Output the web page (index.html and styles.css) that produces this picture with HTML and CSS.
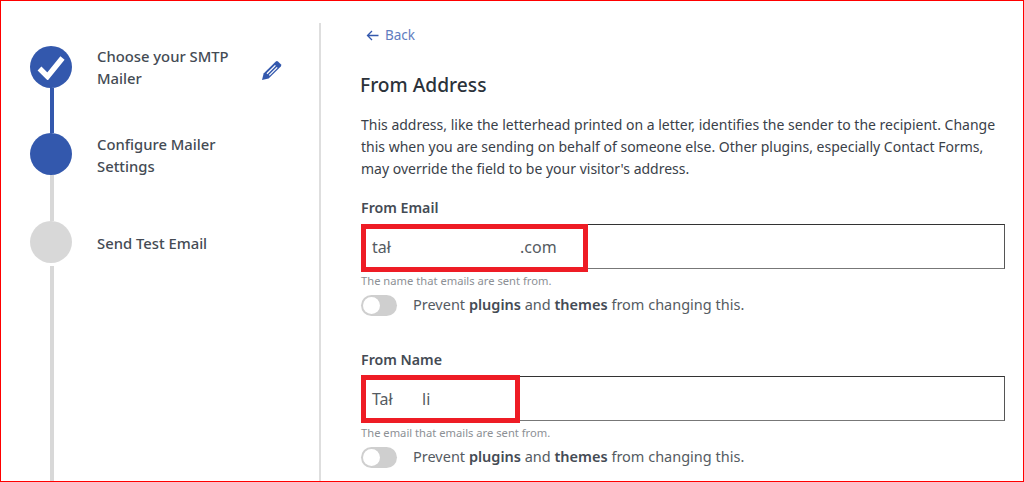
FILE: index.html
```html
<!DOCTYPE html>
<html lang="en">

<head>
    <meta charset="UTF-8">
    <title>From Address</title>
    <link rel="stylesheet" href="styles.css">
</head>

<body>
    <div class="frame">
        <div class="steps">
            <div class="step step-done">
                <div class="marker">
                    <div class="circle">
                        <svg width="28" height="25" viewBox="0 0 28 25"><path d="M2.5 13.5l8 8L25.5 3" fill="none" stroke="#fff" stroke-width="5.4"/></svg>
                    </div>
                    <div class="line"></div>
                </div>
                <div class="step-name">Choose your SMTP Mailer</div>
                <svg class="edit" width="22" height="22" viewBox="0 0 22 22"><path d="M1 21l1.6-6.4L14.8 2.4a1.6 1.6 0 0 1 2.2 0l2.8 2.8a1.6 1.6 0 0 1 0 2.2L7.6 19.6z" fill="#3358ad"/><path d="M6 14.8l8.4-8.4M8.2 16.4l8-8" stroke="#fff" stroke-width="1.3"/></svg>
            </div>
            <div class="step step-current">
                <div class="marker">
                    <div class="circle"></div>
                    <div class="line"></div>
                </div>
                <div class="step-name step-second">Configure Mailer Settings</div>
            </div>
            <div class="step step-todo">
                <div class="marker">
                    <div class="circle"></div>
                    <div class="line"></div>
                </div>
                <div class="step-name step-single">Send Test Email</div>
            </div>
        </div>

        <div class="content">
            <a class="back" href="#">
                <svg width="13" height="11" viewBox="0 0 13 11"><path d="M12.5 5.5H1.5M6 1L1.5 5.5 6 10" fill="none" stroke="#3358ad" stroke-width="1.3"/></svg>
                Back
            </a>
            <h2>From Address</h2>
            <p class="intro">This address, like the letterhead printed on a letter, identifies the sender to the recipient. Change this when you are sending on behalf of someone else. Other plugins, especially Contact Forms, may override the field to be your visitor's address.</p>

            <div class="field">
                <label>From Email</label>
                <div class="input">
                    <span class="first first-email">tał</span><span class="domain">.com</span>
                    <div class="redact redact-email"></div>
                </div>
                <div class="hint">The name that emails are sent from.</div>
                <div class="toggle-row">
                    <span class="toggle"></span>
                    <span>Prevent <b>plugins</b> and <b>themes</b> from changing this.</span>
                </div>
            </div>

            <div class="field field-name">
                <label>From Name</label>
                <div class="input">
                    <span class="first first-name">Tał</span><span class="surname">li</span>
                    <div class="redact redact-name"></div>
                </div>
                <div class="hint">The email that emails are sent from.</div>
                <div class="toggle-row">
                    <span class="toggle"></span>
                    <span>Prevent <b>plugins</b> and <b>themes</b> from changing this.</span>
                </div>
            </div>
        </div>
    </div>
</body>

</html>
```

FILE: styles.css
```css
html, body {
    margin: 0;
    height: 100%;
    overflow: hidden;
}

body {
    font-family: "Noto Sans", "Open Sans", sans-serif;
    background-color: #ffffff;
    color: #444b54;
}

.frame {
    display: flex;
    box-sizing: border-box;
    width: 1024px;
    height: 482px;
    padding-top: 22px;
    border: 1px solid #ff0000;
}

.steps {
    flex-shrink: 0;
    width: 289px;
    padding: 23px 0 0 29px;
    border-right: 2px solid #dedede;
}

.step {
    display: flex;
    height: 87px;
}

.step-current {
    height: 88px;
}

.marker {
    display: flex;
    flex-direction: column;
    align-items: center;
    width: 42px;
    flex-shrink: 0;
}

.circle {
    display: flex;
    align-items: center;
    justify-content: center;
    width: 42px;
    height: 42px;
    border-radius: 50%;
    flex-shrink: 0;
}

.line {
    width: 4px;
    margin-left: 2px;
    flex-grow: 1;
}

.step-done .circle,
.step-done .line,
.step-current .circle {
    background-color: #3358ad;
}

.step-current .line,
.step-todo .circle {
    background-color: #d8d8d8;
}

.step-todo {
    height: 260px;
}

.step-todo .line {
    margin-top: 3px;
    background-color: #d8d8d8;
}

.step-name {
    width: 150px;
    margin-left: 25px;
    margin-top: -1px;
    font-size: 14.8px;
    font-weight: 500;
    line-height: 22px;
}

.step-second {
    margin-top: 0;
}

.step-single {
    margin-top: 11px;
}

.edit {
    margin: 13px 0 0 14px;
}

.content {
    flex-grow: 1;
    padding-left: 40px;
    padding-right: 18px;
}

.back {
    display: flex;
    align-items: center;
    gap: 6px;
    margin-left: 5px;
    padding-top: 1px;
    font-size: 13.5px;
    line-height: 22px;
    color: #5f7dc0;
    text-decoration: none;
}

h2 {
    margin: 26px 0 0 -1px;
    font-size: 19.2px;
    font-weight: 500;
    line-height: 26px;
    color: #2b323a;
}

.intro {
    margin: 16px 0 0;
    font-size: 14px;
    line-height: 22px;
    color: #3a4149;
}

.field {
    margin-top: 18px;
}

.field-name {
    margin-top: 34px;
}

label {
    display: block;
    font-size: 14.2px;
    font-weight: 600;
    line-height: 20px;
    color: #444b54;
}

.input {
    position: relative;
    display: flex;
    align-items: center;
    box-sizing: border-box;
    height: 45px;
    margin-top: 6px;
    padding-left: 10px;
    border: 1px solid #333333;
    border-right-color: #555555;
    border-bottom-color: #777777;
    font-size: 16px;
    color: #555b62;
}

.first {
    white-space: nowrap;
}

.first-email {
    width: 18px;
}

.first-name {
    width: 19px;
}

.domain {
    margin-left: 130px;
}

.surname {
    margin-left: 31px;
}

/* red annotation boxes drawn on top of the screenshot */
.redact {
    position: absolute;
    box-sizing: border-box;
    border: 5px solid #ee1c25;
}

.redact-email {
    left: -1px;
    top: -1px;
    width: 227px;
    height: 48px;
}

.redact-name {
    left: -1px;
    top: -2px;
    width: 159px;
    height: 48px;
}

.hint {
    margin-top: 5px;
    font-size: 11.2px;
    line-height: 14px;
    color: #8c9095;
}

.toggle-row {
    display: flex;
    align-items: flex-start;
    gap: 16px;
    margin-top: 5px;
    font-size: 14.5px;
    line-height: 22px;
    color: #555b62;
}

.toggle-row b {
    font-weight: 600;
    color: #444b54;
}

.toggle {
    position: relative;
    width: 36px;
    height: 21px;
    margin-top: 2px;
    border-radius: 11px;
    background-color: #cfcfcf;
}

.toggle::before {
    content: "";
    position: absolute;
    left: 2px;
    top: 2px;
    width: 17px;
    height: 17px;
    border-radius: 50%;
    background-color: #ffffff;
}
```
